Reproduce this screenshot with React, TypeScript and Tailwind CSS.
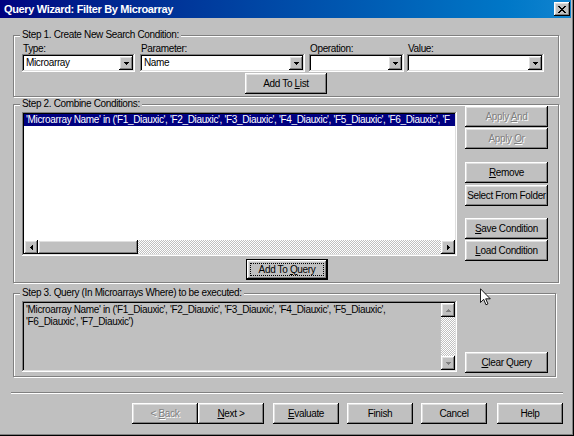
import React from "react";

// Win98-style bevels
const raised =
  "bg-[#c0c0c0] shadow-[inset_-1px_-1px_#000,inset_1px_1px_#fff,inset_-2px_-2px_#808080,inset_2px_2px_#dfdfdf]";
const raisedDefault =
  "bg-[#c0c0c0] shadow-[inset_0_0_0_1px_#000,inset_-2px_-2px_#000,inset_2px_2px_#fff,inset_-3px_-3px_#808080,inset_3px_3px_#dfdfdf]";
const sunken =
  "shadow-[inset_-1px_-1px_#fff,inset_1px_1px_#808080,inset_-2px_-2px_#dfdfdf,inset_2px_2px_#000]";
const dither =
  "bg-[repeating-conic-gradient(#c0c0c0_0%_25%,#ffffff_0%_50%)] bg-[length:2px_2px]";

function DownTri({ color = "#000" }: { color?: string }) {
  return (
    <svg width="5" height="3" viewBox="0 0 5 3" shapeRendering="crispEdges">
      <path d="M0 0h5v1H0zM1 1h3v1H1zM2 2h1v1H2z" fill={color} />
    </svg>
  );
}
function UpTri({ color = "#000" }: { color?: string }) {
  return (
    <svg width="5" height="3" viewBox="0 0 5 3" shapeRendering="crispEdges">
      <path d="M2 0h1v1H2zM1 1h3v1H1zM0 2h5v1H0z" fill={color} />
    </svg>
  );
}
function LeftTri() {
  return (
    <svg width="3" height="5" viewBox="0 0 3 5" shapeRendering="crispEdges">
      <path d="M2 0h1v5H2zM1 1h1v3H1zM0 2h1v1H0z" fill="#000" />
    </svg>
  );
}
function RightTri() {
  return (
    <svg width="3" height="5" viewBox="0 0 3 5" shapeRendering="crispEdges">
      <path d="M0 0h1v5H0zM1 1h1v3H1zM2 2h1v1H2z" fill="#000" />
    </svg>
  );
}

function U({ children }: { children: React.ReactNode }) {
  return <span className="underline underline-offset-[1px]">{children}</span>;
}

function Btn({
  children,
  className = "",
  disabled = false,
  isDefault = false,
}: {
  children: React.ReactNode;
  className?: string;
  disabled?: boolean;
  isDefault?: boolean;
}) {
  return (
    <div
      className={`relative flex items-center justify-center h-[21px] whitespace-nowrap ${
        isDefault ? raisedDefault : raised
      } ${disabled ? "text-[#808080] [text-shadow:1px_1px_0_#fff]" : "text-black"} ${className}`}
    >
      {isDefault && (
        <div className="absolute inset-[4px] border border-dotted border-black" />
      )}
      <span className="relative">{children}</span>
    </div>
  );
}

function Combo({ value = "", className = "" }: { value?: string; className?: string }) {
  return (
    <div className={`flex h-[18px] bg-white p-[2px] ${sunken} ${className}`}>
      <div className="flex-1 pl-[2px] leading-[14px] overflow-hidden whitespace-nowrap">
        {value}
      </div>
      <div className={`flex w-[14px] h-[14px] items-center justify-center ${raised}`}>
        <DownTri />
      </div>
    </div>
  );
}

function Field({ label, value, width }: { label: string; value?: string; width: string }) {
  return (
    <div className={`flex flex-col ${width}`}>
      <div className="h-[11px] leading-[11px] pl-[1px]">{label}</div>
      <Combo value={value} />
    </div>
  );
}

function Group({
  label,
  className,
  children,
}: {
  label: string;
  className: string;
  children: React.ReactNode;
}) {
  return (
    <div
      className={`relative border border-[#808080] shadow-[inset_1px_1px_#fff,1px_1px_#fff] ${className}`}
    >
      <span className="absolute left-[6px] -top-[7px] px-[2px] bg-[#c0c0c0] leading-[12px] whitespace-nowrap">
        {label}
      </span>
      {children}
    </div>
  );
}

function CloseBtn() {
  return (
    <div className={`flex w-[16px] h-[14px] items-center justify-center ${raised}`}>
      <svg width="8" height="7" viewBox="0 0 8 7" shapeRendering="crispEdges">
        <path
          d="M0 0h2v1H0zM6 0h2v1H6zM1 1h2v1H1zM5 1h2v1H5zM2 2h4v1H2zM3 3h2v1H3zM2 4h4v1H2zM1 5h2v1H1zM5 5h2v1H5zM0 6h2v1H0zM6 6h2v1H6z"
          fill="#000"
        />
      </svg>
    </div>
  );
}

// The list row is clipped by the list box; only the visible part is rendered.
const conditionText =
  "'Microarray Name' in ('F1_Diauxic', 'F2_Diauxic', 'F3_Diauxic', 'F4_Diauxic', 'F5_Diauxic', 'F6_Diauxic', 'F";

export default function App() {
  return (
    <div className="relative w-[574px] h-[436px] overflow-hidden bg-[#c0c0c0] shadow-[inset_-1px_-1px_#000,inset_-2px_-2px_#808080] font-['Liberation_Sans',Arial,sans-serif] text-[10px] leading-[12px] tracking-[-0.35px] text-black">
      {/* caption */}
      <div className="flex items-center h-[18px] w-[571px] pl-[4px] pr-[1px] bg-linear-to-r from-[#000080] to-[#1084d0]">
        <span className="flex-1 text-white font-bold text-[11px] tracking-[-0.35px]">
          Query Wizard: Filter By Microarray
        </span>
        <CloseBtn />
      </div>

      {/* Step 1 */}
      <Group
        label="Step 1. Create New Search Condition:"
        className="ml-[13px] mt-[17px] w-[546px] h-[62px] pl-[8px] pt-[7px]"
      >
        <div className="flex">
          <Field label="Type:" value="Microarray" width="w-[113px]" />
          <div className="ml-[5px]">
            <Field label="Parameter:" value="Name" width="w-[165px]" />
          </div>
          <div className="ml-[4px]">
            <Field label="Operation:" width="w-[95px]" />
          </div>
          <div className="ml-[3px]">
            <Field label="Value:" width="w-[137px]" />
          </div>
        </div>
        <Btn className="ml-[223px] mt-[1px] w-[82px]">
          Add To <U>L</U>ist
        </Btn>
      </Group>

      {/* Step 2 */}
      <Group
        label="Step 2. Combine Conditions:"
        className="ml-[13px] mt-[7px] w-[546px] h-[179px] pl-[8px] pt-[1px]"
      >
        <div className="flex">
          <div className="flex flex-col">
            <div className={`mt-[6px] w-[435px] h-[144px] bg-white p-[2px] flex flex-col ${sunken}`}>
              <div className="flex-1 overflow-hidden">
                <div className="h-[12px] pl-[2px] leading-[12px] whitespace-nowrap overflow-hidden bg-[#000080] text-white">
                  {conditionText}
                </div>
              </div>
              <div className="flex h-[14px]">
                <div className={`flex w-[14px] h-[14px] items-center justify-center ${raised}`}>
                  <LeftTri />
                </div>
                <div className={`w-[100px] h-[14px] ${raised}`} />
                <div className={`flex-1 ${dither}`} />
                <div className={`flex w-[14px] h-[14px] items-center justify-center ${raised}`}>
                  <RightTri />
                </div>
              </div>
            </div>
            <Btn isDefault className="ml-[224px] mt-[3px] w-[82px]">
              Add To <U>Q</U>uery
            </Btn>
          </div>
          <div className="ml-[8px] flex flex-col w-[83px]">
            <Btn disabled>
              Apply <U>A</U>nd
            </Btn>
            <Btn disabled className="mt-[1px]">
              Apply <U>O</U>r
            </Btn>
            <Btn className="mt-[13px]">
              <U>R</U>emove
            </Btn>
            <Btn className="mt-[2px]">Select From Folder</Btn>
            <Btn className="mt-[12px]">
              <U>S</U>ave Condition
            </Btn>
            <Btn className="mt-[1px]">
              <U>L</U>oad Condition
            </Btn>
          </div>
        </div>
      </Group>

      {/* Step 3 */}
      <Group
        label="Step 3. Query (In Microarrays Where) to be executed:"
        className="ml-[13px] mt-[10px] w-[543px] h-[84px] pl-[8px] pt-[7px]"
      >
        <div className="flex">
          <div className={`flex w-[435px] h-[71px] p-[2px] bg-[#c0c0c0] ${sunken}`}>
            <div className="flex-1 pl-[2px] pt-[1px] leading-[12px]">
              <div className="whitespace-nowrap">
                'Microarray Name' in ('F1_Diauxic', 'F2_Diauxic', 'F3_Diauxic', 'F4_Diauxic', 'F5_Diauxic',
              </div>
              <div className="whitespace-nowrap">'F6_Diauxic', 'F7_Diauxic')</div>
            </div>
            <div className="flex flex-col w-[14px]">
              <div className={`flex h-[14px] items-center justify-center ${raised}`}>
                <UpTri color="#808080" />
              </div>
              <div className={`flex-1 ${dither}`} />
              <div className={`flex h-[14px] items-center justify-center ${raised}`}>
                <DownTri color="#808080" />
              </div>
            </div>
          </div>
          <Btn className="ml-[8px] mt-[51px] w-[83px]">
            <U>C</U>lear Query
          </Btn>
        </div>
      </Group>

      {/* separator */}
      <div className="ml-[11px] mt-[15px] w-[552px] h-[2px] border-t border-t-[#808080] border-b border-b-white" />

      {/* wizard buttons */}
      <div className="flex ml-[132px] mt-[9px]">
        <Btn disabled className="w-[66px]">
          &lt; <U>B</U>ack
        </Btn>
        <Btn className="w-[66px]">
          <U>N</U>ext &gt;
        </Btn>
        <Btn className="ml-[9px] w-[66px]">
          <U>E</U>valuate
        </Btn>
        <Btn className="ml-[8px] w-[66px]">Finish</Btn>
        <Btn className="ml-[8px] w-[66px]">Cancel</Btn>
        <Btn className="ml-[10px] w-[66px]">Help</Btn>
      </div>

      {/* mouse pointer */}
      <svg
        className="absolute left-[480px] top-[288px]"
        width="11"
        height="18"
        viewBox="0 0 12 19"
      >
        <path d="M0.5 0.5v15l3.5-3.5 2.5 6 2.2-1-2.5-5.5h5z" fill="#fff" stroke="#000" />
      </svg>
    </div>
  );
}
